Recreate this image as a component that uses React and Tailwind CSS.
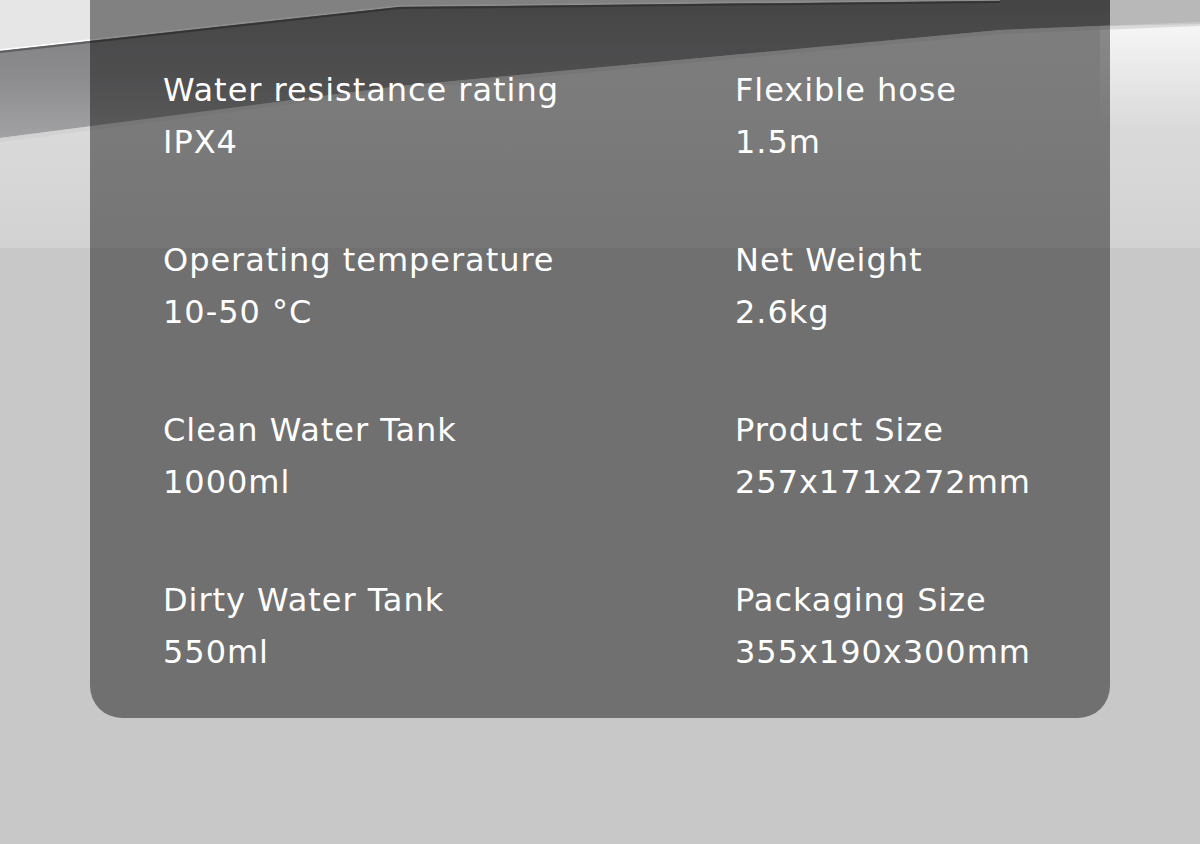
import React from 'react';

const specs = [
  { label: 'Water resistance rating', value: 'IPX4' },
  { label: 'Flexible hose', value: '1.5m' },
  { label: 'Operating temperature', value: '10-50 °C' },
  { label: 'Net Weight', value: '2.6kg' },
  { label: 'Clean Water Tank', value: '1000ml' },
  { label: 'Product Size', value: '257x171x272mm' },
  { label: 'Dirty Water Tank', value: '550ml' },
  { label: 'Packaging Size', value: '355x190x300mm' },
];

// blurred product photo strip behind the card
function BackdropPhoto() {
  return (
    <svg width="1200" height="248" viewBox="0 0 1200 248" className="block">
      <defs>
        <linearGradient id="floor" x1="0" y1="0" x2="0" y2="1">
          <stop offset="0" stopColor="#e2e2e2" />
          <stop offset="1" stopColor="#d2d2d2" />
        </linearGradient>
        <linearGradient id="band" x1="0" y1="0" x2="0" y2="1">
          <stop offset="0" stopColor="#7c7c7e" />
          <stop offset="0.6" stopColor="#8e8e90" />
          <stop offset="1" stopColor="#a2a2a4" />
        </linearGradient>
        <linearGradient id="glow" x1="0" y1="0" x2="0" y2="1">
          <stop offset="0" stopColor="#f6f6f6" />
          <stop offset="1" stopColor="#d8d8d8" />
        </linearGradient>
      </defs>
      <rect width="1200" height="248" fill="url(#floor)" />
      <rect x="1100" y="24" width="100" height="110" fill="url(#glow)" />
      <polygon points="0,0 1200,0 1000,0 400,6 0,50" fill="#e6e6e6" />
      <polygon points="0,50 400,6 1000,0 1200,0 1200,22 1000,30 400,86 0,138" fill="url(#band)" />
      <polygon points="1110,0 1200,0 1200,24 1110,26" fill="#b8b8b8" />
      <polyline points="0,50 400,6 1000,0" fill="none" stroke="#ffffff" strokeWidth="1.5" />
      <polyline points="0,52 400,8 1000,2" fill="none" stroke="#5e5e60" strokeWidth="2" />
      <polyline points="0,140 400,88 1000,32 1200,24" fill="none" stroke="#cfcfd0" strokeWidth="4" opacity="0.7" />
    </svg>
  );
}

export default function App() {
  return (
    <div className="relative w-[1200px] h-[844px] overflow-hidden bg-[#c8c8c8]" style={{ fontFamily: '"DejaVu Sans", sans-serif' }}>
      <div className="absolute top-0 left-0">
        <BackdropPhoto />
      </div>

      {/* Spec card */}
      <div className="relative mx-[90px] bg-black/[0.44] rounded-b-[32px] pl-[73px] pt-[64px] pb-[40px]">
        <div className="grid grid-cols-[572px_1fr] gap-y-[66px]">
          {specs.map((s) => (
            <div key={s.label} className="text-white text-[32px] leading-[52px] tracking-[0.03em]">
              <p>{s.label}</p>
              <p>{s.value}</p>
            </div>
          ))}
        </div>
      </div>
    </div>
  );
}
